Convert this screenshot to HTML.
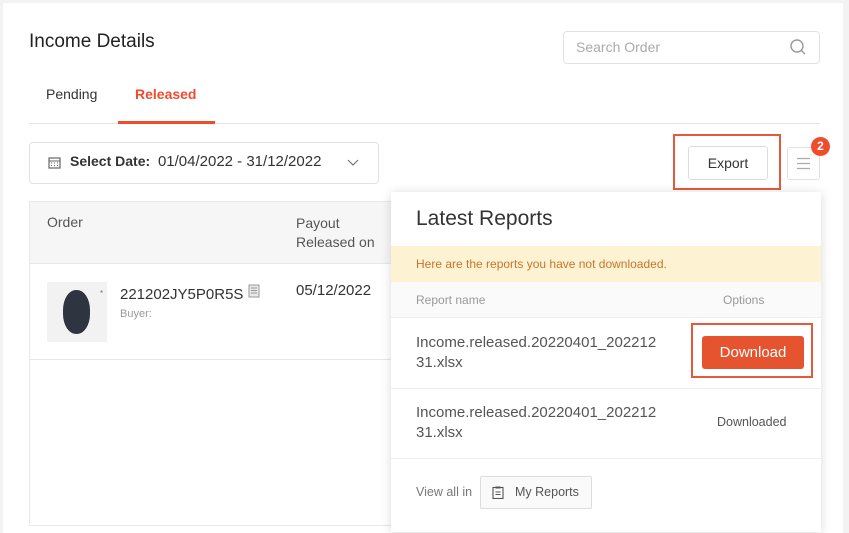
<!DOCTYPE html>
<html><head><style>
*{box-sizing:border-box;margin:0;padding:0}
body{width:849px;height:526px;background:#f3f3f3;font-family:"Liberation Sans",Arial,sans-serif;position:relative;overflow:hidden;color:#333}
.a{position:absolute}
.card{left:3px;top:3px;width:840px;height:530px;background:#fff}
</style></head><body>
<div class="a card"></div>
<div class="a" style="left:29px;top:31px;font-size:19px;color:#222">Income Details</div>
<div class="a" style="left:563px;top:31px;width:257px;height:33px;border:1px solid #e2e2e2;border-radius:4px"></div>
<div class="a" style="left:576px;top:39px;font-size:14px;color:#aaa">Search Order</div>
<svg class="a" style="left:789px;top:38px" width="18" height="18"><circle cx="8" cy="8" r="6" fill="none" stroke="#999" stroke-width="1.4"/><line x1="12.5" y1="12.5" x2="16" y2="16" stroke="#999" stroke-width="1.4"/></svg>
<div class="a" style="left:46px;top:86px;font-size:14px;color:#333">Pending</div>
<div class="a" style="left:135px;top:86px;font-size:14px;color:#ee4d2d;font-weight:bold">Released</div>
<div class="a" style="left:29px;top:123px;width:791px;height:1px;background:#e5e5e5"></div>
<div class="a" style="left:118px;top:121px;width:97px;height:3px;background:#ee4d2d"></div>

<div class="a" style="left:29px;top:142px;width:350px;height:42px;border:1px solid #e2e2e2;border-radius:4px"></div>
<svg class="a" style="left:48px;top:156px" width="14" height="14"><rect x="1" y="2" width="11" height="10" fill="none" stroke="#666" stroke-width="1.2"/><line x1="1" y1="5" x2="12" y2="5" stroke="#666"/><path d="M3 7h1M6 7h1M9 7h1M3 9.5h1M6 9.5h1M9 9.5h1" stroke="#666"/></svg>
<div class="a" style="left:70px;top:153px;font-size:14px;color:#333;white-space:nowrap;width:260px;overflow:hidden"><b>Select Date:</b>&nbsp; <span style="font-size:15px">01/04/2022 - 31/12/2022</span></div>
<svg class="a" style="left:347px;top:158px" width="12" height="10"><path d="M1 2l5 5 5-5" fill="none" stroke="#777" stroke-width="1.2"/></svg>

<div class="a" style="left:29px;top:201px;width:400px;height:325px;border:1px solid #e8e8e8"></div>
<div class="a" style="left:30px;top:202px;width:400px;height:62px;background:#f6f6f6;border-bottom:1px solid #e8e8e8"></div>
<div class="a" style="left:47px;top:214px;font-size:14px;color:#555">Order</div>
<div class="a" style="left:296px;top:214px;font-size:14px;color:#555;line-height:19px">Payout<br>Released on</div>
<div class="a" style="left:30px;top:359px;width:400px;height:1px;background:#e8e8e8"></div>
<div class="a" style="left:47px;top:282px;width:60px;height:60px;background:#f2f2f2"></div>
<div class="a" style="left:63px;top:290px;width:27px;height:44px;background:#2e3440;border-radius:13px/20px"></div>
<div class="a" style="left:100px;top:289px;font-size:8px;color:#777">*</div>
<div class="a" style="left:120px;top:286px;font-size:15px;color:#333">221202JY5P0R5S</div>
<svg class="a" style="left:247px;top:284px" width="14" height="14"><rect x="2" y="1" width="10" height="12" fill="#e8e8e8" stroke="#999"/><path d="M4 4h6M4 6.5h6M4 9h6" stroke="#999"/></svg>
<div class="a" style="left:120px;top:308px;font-size:11px;color:#999">Buyer:</div>
<div class="a" style="left:296px;top:282px;font-size:15px;color:#333">05/12/2022</div>

<div class="a" style="left:673px;top:134px;width:108px;height:56px;border:2px solid #e55a3c"></div>
<div class="a" style="left:688px;top:146px;width:80px;height:34px;border:1px solid #ddd;border-radius:3px;text-align:center;line-height:32px;font-size:14px;color:#333">Export</div>
<div class="a" style="left:787px;top:147px;width:33px;height:33px;border:1px solid #e2e2e2;border-radius:3px"></div>
<svg class="a" style="left:796px;top:157px" width="16" height="14"><path d="M1 1.5h13M1 6.5h13M1 11.5h13" stroke="#aaa" stroke-width="1.3"/></svg>
<div class="a" style="left:811px;top:137px;width:19px;height:19px;border-radius:50%;background:#ee4d2d;color:#fff;font-size:12px;font-weight:bold;text-align:center;line-height:19px">2</div>

<div class="a" style="left:391px;top:192px;width:430px;height:340px;background:#fff;box-shadow:0 1px 10px rgba(0,0,0,.15)"></div>
<div class="a" style="left:416px;top:207px;font-size:21px;color:#333">Latest Reports</div>
<div class="a" style="left:391px;top:246px;width:430px;height:36px;background:#fdf3d2"></div>
<div class="a" style="left:416px;top:257px;font-size:12px;color:#c9742b">Here are the reports you have not downloaded.</div>
<div class="a" style="left:391px;top:282px;width:430px;height:36px;background:#fafafa;border-bottom:1px solid #eee"></div>
<div class="a" style="left:416px;top:293px;font-size:12px;color:#999">Report name</div>
<div class="a" style="left:723px;top:293px;font-size:12px;color:#999">Options</div>
<div class="a" style="left:416px;top:333px;font-size:15px;color:#555;line-height:20px">Income.released.20220401_202212<br>31.xlsx</div>
<div class="a" style="left:691px;top:323px;width:122px;height:55px;border:2px solid #e55a3c"></div>
<div class="a" style="left:702px;top:336px;width:102px;height:33px;background:#e5532f;border-radius:3px;color:#fff;font-size:15px;text-align:center;line-height:33px">Download</div>
<div class="a" style="left:391px;top:388px;width:430px;height:1px;background:#eee"></div>
<div class="a" style="left:416px;top:403px;font-size:15px;color:#555;line-height:20px">Income.released.20220401_202212<br>31.xlsx</div>
<div class="a" style="left:717px;top:415px;font-size:12.5px;color:#555">Downloaded</div>
<div class="a" style="left:391px;top:458px;width:430px;height:1px;background:#eee"></div>
<div class="a" style="left:416px;top:485px;font-size:12.5px;color:#777">View all in</div>
<div class="a" style="left:480px;top:476px;width:112px;height:33px;border:1px solid #ddd;border-radius:2px;background:#fafafa"></div>
<svg class="a" style="left:492px;top:486px" width="12" height="13"><rect x="1" y="1.5" width="10" height="11" fill="none" stroke="#555" stroke-width="1.1"/><rect x="3.5" y="0.5" width="5" height="2" fill="#555"/><path d="M3.5 6h5M3.5 8.5h5" stroke="#555"/></svg>
<div class="a" style="left:515px;top:485px;font-size:12.5px;color:#555">My Reports</div>
</body></html>
